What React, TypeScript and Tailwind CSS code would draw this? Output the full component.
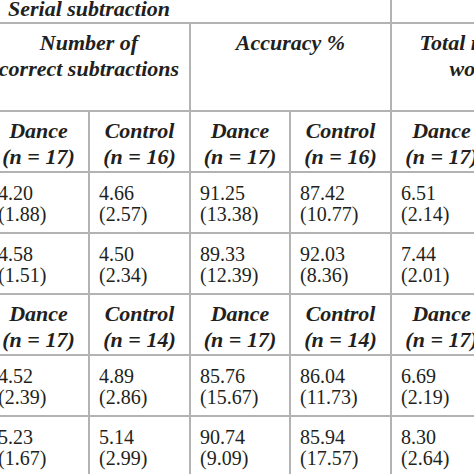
import React from 'react'

type Cell = [string, string]

const SECTIONS: { n: [string, string]; rows: Cell[][] }[] = [
  {
    n: ['17', '16'],
    rows: [
      [['4.20', '1.88'], ['4.66', '2.57'], ['91.25', '13.38'], ['87.42', '10.77'], ['6.51', '2.14'], ['6.81', '2.37']],
      [['4.58', '1.51'], ['4.50', '2.34'], ['89.33', '12.39'], ['92.03', '8.36'], ['7.44', '2.01'], ['7.06', '2.18']],
    ],
  },
  {
    n: ['17', '14'],
    rows: [
      [['4.52', '2.39'], ['4.89', '2.86'], ['85.76', '15.67'], ['86.04', '11.73'], ['6.69', '2.19'], ['6.93', '2.43']],
      [['5.23', '1.67'], ['5.14', '2.99'], ['90.74', '9.09'], ['85.94', '17.57'], ['8.30', '2.64'], ['7.21', '2.50']],
    ],
  },
]

const line = 'border-2 border-[#b3b3b3]'
const head = `${line} font-['Liberation_Serif'] align-top text-center font-bold italic text-[22px] leading-[26px] pt-[6px] px-1 whitespace-nowrap`
const data = `${line} font-['Liberation_Serif'] align-top text-left font-normal text-[20px] leading-[21px] pt-[10px] pl-[9px] whitespace-nowrap`

export default function App() {
  return (
    <div className="w-[474px] h-[474px] overflow-hidden bg-white text-[#231f20] font-['Liberation_Serif']">
      <table className="-ml-[13px] w-[606px] table-fixed border-collapse font-['Liberation_Serif'] text-[#231f20]">
        <colgroup>
          <col className="w-[101px]" />
          <col className="w-[101px]" />
          <col className="w-[100px]" />
          <col className="w-[101px]" />
          <col className="w-[101px]" />
          <col className="w-[102px]" />
        </colgroup>
        <tbody>
          <tr className="h-[23px]">
            <th
              colSpan={4}
              className="border-r-2 border-b-2 border-[#b3b3b3] font-['Liberation_Serif'] align-top text-left pl-[20px] font-bold italic text-[22px] leading-[18px] whitespace-nowrap"
            >
              Serial subtraction
            </th>
            <th colSpan={2} className="border-b-2 border-[#b3b3b3]" />
          </tr>
          <tr className="h-[88px]">
            <th colSpan={2} className={head}>
              Number of
              <br />
              correct subtractions
            </th>
            <th colSpan={2} className={head}>
              Accuracy %
            </th>
            <th colSpan={2} className={head}>
              Total number of
              <br />
              words (n)
            </th>
          </tr>
          {SECTIONS.map((sec, si) => (
            <React.Fragment key={si}>
              <tr className="h-[61px]">
                {[0, 1, 2, 3, 4, 5].map((c) => (
                  <th key={c} className={head}>
                    {c % 2 === 0 ? 'Dance' : 'Control'}
                    <br />
                    (n = {sec.n[c % 2]})
                  </th>
                ))}
              </tr>
              {sec.rows.map((row, ri) => (
                <tr key={ri} className="h-[61px]">
                  {row.map(([m, sd], ci) => (
                    <td key={ci} className={data}>
                      {m}
                      <br />({sd})
                    </td>
                  ))}
                </tr>
              ))}
            </React.Fragment>
          ))}
        </tbody>
      </table>
    </div>
  )
}
